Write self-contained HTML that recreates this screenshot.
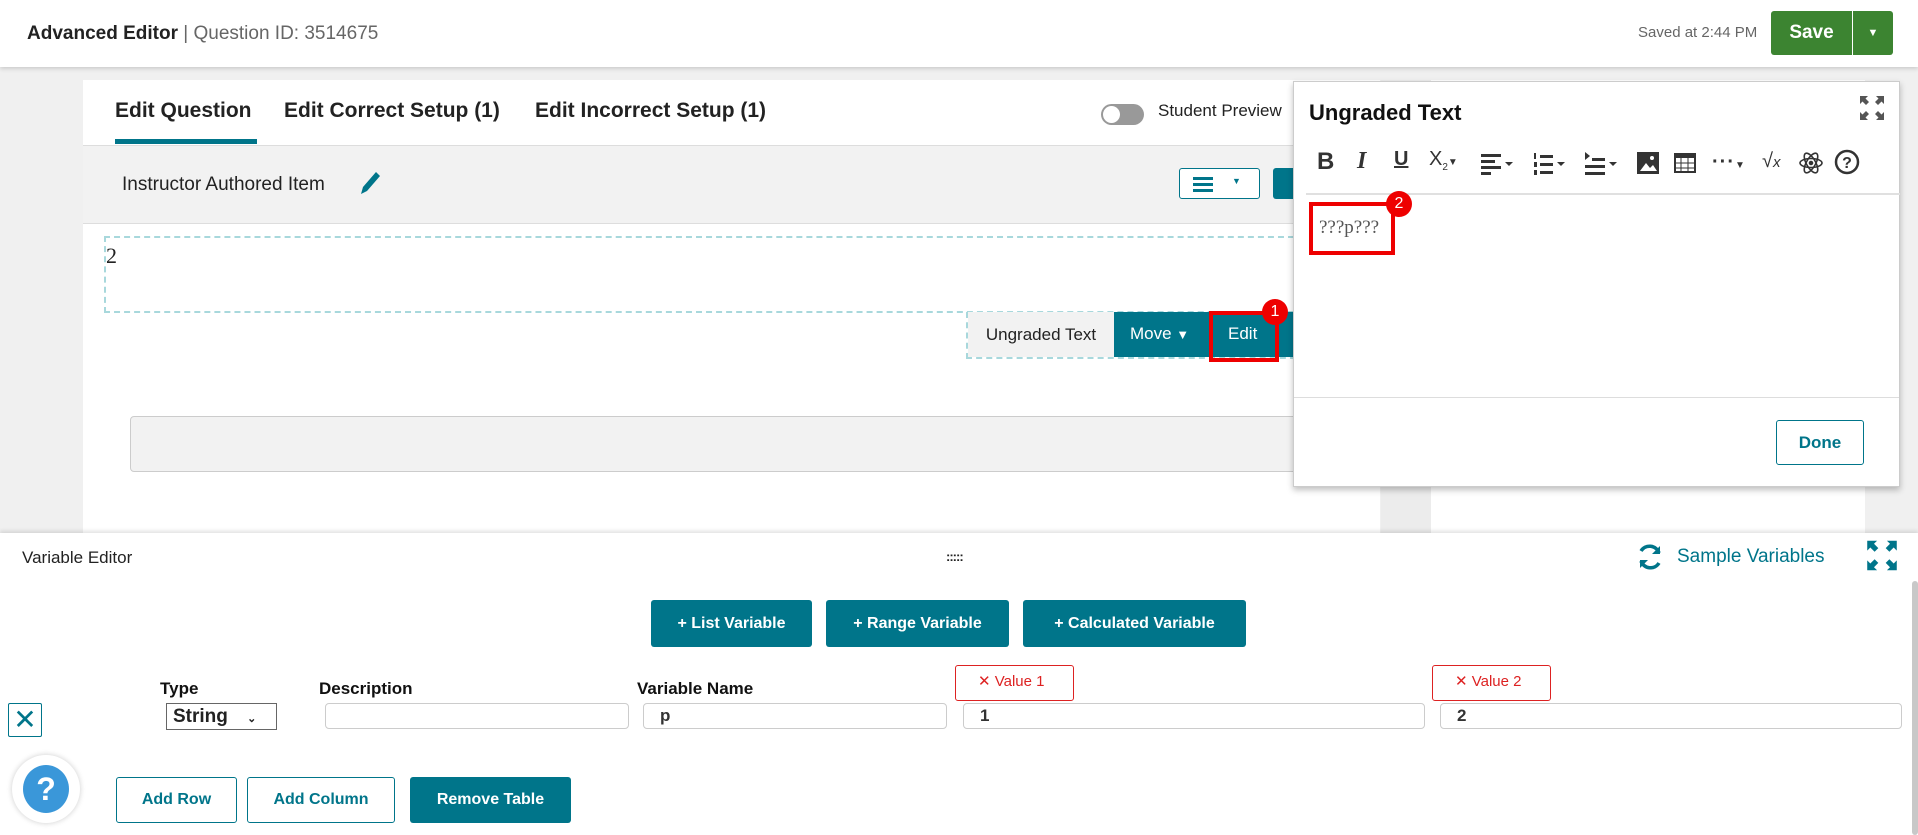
<!DOCTYPE html>
<html><head><meta charset="utf-8"><style>
*{box-sizing:border-box;margin:0;padding:0}
body{width:1918px;height:835px;overflow:hidden;background:#f0f0f0;font-family:"Liberation Sans",sans-serif;position:relative;color:#222}
.a{position:absolute}
.teal{background:#00758a;color:#fff}
.btn{position:absolute;border-radius:3px;font-weight:bold;font-size:16px;display:flex;align-items:center;justify-content:center}
.obtn{position:absolute;border:1px solid #00758a;border-radius:3px;color:#00758a;font-weight:bold;font-size:16px;display:flex;align-items:center;justify-content:center;background:#fff}
.inp{position:absolute;border:1px solid #ccc;border-radius:4px;background:#fff;font-size:17px;color:#333;padding-left:16px;line-height:24px;font-weight:bold}
.lbl{position:absolute;font-weight:bold;font-size:17px;color:#111}
.tab{position:absolute;top:99px;font-size:21px;font-weight:bold;color:#222}
.badge{position:absolute;width:26px;height:26px;border-radius:50%;background:#e00;color:#fff;font-size:16px;text-align:center;line-height:26px}
.ic{position:absolute;top:148px}
</style></head><body>
<div class="a" style="left:0;top:0;width:1918px;height:67px;background:#fff;box-shadow:0 2px 4px rgba(0,0,0,.15)"></div>
<div class="a" style="left:27px;top:23px;font-size:19px;color:#222"><b style="font-weight:600">Advanced Editor</b><span style="color:#666"> | Question ID: 3514675</span></div>
<div class="a" style="left:1638px;top:24px;font-size:15px;color:#666">Saved at 2:44 PM</div>
<div class="a" style="left:1771px;top:11px;width:81px;height:44px;background:#3c8431;border-radius:3px 0 0 3px;color:#fff;font-weight:bold;font-size:19px;text-align:center;line-height:44px">Save</div>
<div class="a" style="left:1853px;top:11px;width:40px;height:44px;background:#3c8431;border-radius:0 3px 3px 0;color:#fff;font-size:11px;text-align:center;line-height:44px">▼</div>

<div class="a" style="left:83px;top:80px;width:1297px;height:455px;background:#fff"></div>
<div class="a" style="left:1381px;top:80px;width:50px;height:455px;background:#ececec"></div>
<div class="a" style="left:1431px;top:80px;width:434px;height:455px;background:#fff"></div>
<div class="tab" style="left:115px">Edit Question</div>
<div class="a" style="left:115px;top:139px;width:142px;height:5px;background:#00758a"></div>
<div class="tab" style="left:284px">Edit Correct Setup (1)</div>
<div class="tab" style="left:535px">Edit Incorrect Setup (1)</div>
<div class="a" style="left:1101px;top:104px;width:43px;height:21px;border-radius:11px;background:#999"></div>
<div class="a" style="left:1103px;top:106px;width:17px;height:17px;border-radius:50%;background:#fff"></div>
<div class="a" style="left:1158px;top:101px;font-size:17px;color:#222">Student Preview</div>
<div class="a" style="left:83px;top:145px;width:1297px;height:79px;background:#f2f2f2;border-top:1px solid #ddd;border-bottom:1px solid #ddd"></div>
<div class="a" style="left:122px;top:174px;font-size:19px;color:#222">Instructor Authored Item</div>
<svg class="a" style="left:357px;top:169px" width="26" height="28" viewBox="0 0 26 28"><path d="M4 25 L6 18 L19 3 L23 7 L10 22 Z" fill="#00758a"/></svg>
<div class="a" style="left:1179px;top:168px;width:81px;height:31px;border:1px solid #00758a;border-radius:3px;background:#fff"></div>
<div class="a" style="left:1193px;top:177px;width:20px;height:3px;background:#00758a;box-shadow:0 6px 0 #00758a,0 12px 0 #00758a"></div>
<div class="a" style="left:1232px;top:176px;font-size:9px;color:#00758a">▼</div>
<div class="a teal" style="left:1273px;top:168px;width:25px;height:31px;border-radius:3px 0 0 3px"></div>
<div class="a" style="left:104px;top:236px;width:1190px;height:77px;border:2px dashed #a8d8dc;border-right:none"></div>
<div class="a" style="left:106px;top:243px;font-family:'Liberation Serif',serif;font-size:22px">2</div>
<div class="a" style="left:966px;top:312px;width:330px;height:47px;border:2px dashed #a8d8dc;border-top:none;border-right:none"></div>
<div class="a" style="left:968px;top:312px;width:146px;height:45px;background:#f2f2f2;font-size:17px;line-height:45px;text-align:center">Ungraded Text</div>
<div class="a teal" style="left:1114px;top:312px;width:180px;height:45px"></div>
<div class="a" style="left:1130px;top:324px;color:#fff;font-size:17px">Move <span style="font-size:13px">▼</span></div>
<div class="a" style="left:1209px;top:311px;width:70px;height:51px;border:4px solid #e00"></div>
<div class="a" style="left:1228px;top:324px;color:#fff;font-size:17px">Edit</div>
<div class="badge" style="left:1262px;top:299px">1</div>
<div class="a" style="left:130px;top:416px;width:1170px;height:56px;background:#f2f2f2;border:1px solid #ccc;border-radius:4px"></div>

<div class="a" style="left:1293px;top:81px;width:607px;height:406px;background:#fff;border:1px solid #ccc;box-shadow:0 3px 6px rgba(0,0,0,.25)"></div>
<div class="a" style="left:1309px;top:100px;font-size:22px;font-weight:bold;color:#111">Ungraded Text</div>
<svg class="a" style="left:1859px;top:95px" width="26" height="26" viewBox="0 0 26 26" fill="#555"><path d="M1 1h8L6.5 3.5 10 7 7 10 3.5 6.5 1 9zM25 1v8L22.5 6.5 19 10 16 7l3.5-3.5L17 1zM1 25v-8l2.5 2.5L7 16l3 3-3.5 3.5L9 25zM25 25h-8l2.5-2.5L16 19l3-3 3.5 3.5L25 17z"/></svg>
<div class="ic" style="left:1317px;font-size:24px;font-weight:bold;color:#333">B</div>
<div class="ic" style="left:1357px;font-size:24px;font-style:italic;font-weight:bold;font-family:'Liberation Serif',serif;color:#333">I</div>
<div class="ic" style="left:1394px;font-size:20px;font-weight:bold;text-decoration:underline;color:#333">U</div>
<div class="ic" style="left:1429px;font-size:20px;color:#333">X<sub style="font-size:10px">2</sub><span style="font-size:10px">▼</span></div>
<svg class="a" style="left:1481px;top:152px" width="36" height="24"><g fill="#333"><rect x="0" y="2" width="20" height="3"/><rect x="0" y="8" width="14" height="3"/><rect x="0" y="14" width="20" height="3"/><rect x="0" y="20" width="10" height="3"/><path d="M24 10h8l-4 4z"/></g></svg>
<svg class="a" style="left:1533px;top:152px" width="36" height="24"><g fill="#333"><rect x="7" y="3" width="13" height="3"/><rect x="7" y="11" width="13" height="3"/><rect x="7" y="19" width="13" height="3"/><rect x="1" y="1" width="2" height="6"/><rect x="1" y="10" width="3" height="5"/><rect x="1" y="18" width="3" height="5"/><path d="M24 10h8l-4 4z"/></g></svg>
<svg class="a" style="left:1585px;top:152px" width="36" height="24"><g fill="#333"><path d="M0 0l5 4-5 4z"/><rect x="7" y="6" width="13" height="3"/><rect x="0" y="13" width="20" height="3"/><rect x="0" y="20" width="20" height="3"/><path d="M24 10h8l-4 4z"/></g></svg>
<svg class="a" style="left:1637px;top:152px" width="22" height="22"><rect x="0" y="0" width="22" height="22" fill="#333"/><path d="M3 19l6-8 4 5 3-3 4 6z" fill="#fff"/><circle cx="15" cy="6" r="2" fill="#fff"/></svg>
<svg class="a" style="left:1674px;top:153px" width="22" height="20"><rect x="1" y="1" width="20" height="18" fill="none" stroke="#333" stroke-width="2"/><rect x="1" y="1" width="20" height="4" fill="#333"/><path d="M1 10h20M1 15h20M7 5v14M14 5v14" stroke="#333"/></svg>
<div class="ic" style="left:1712px;top:151px;font-size:20px;font-weight:bold;color:#333;letter-spacing:1px">···<span style="font-size:10px">▼</span></div>
<div class="ic" style="left:1762px;top:150px;font-size:20px;color:#333">√<i style="font-size:15px">x</i></div>
<svg class="a" style="left:1798px;top:150px" width="26" height="26" viewBox="0 0 26 26" fill="none" stroke="#333" stroke-width="1.6"><ellipse cx="13" cy="13" rx="11" ry="4.5"/><ellipse cx="13" cy="13" rx="11" ry="4.5" transform="rotate(60 13 13)"/><ellipse cx="13" cy="13" rx="11" ry="4.5" transform="rotate(-60 13 13)"/><circle cx="13" cy="13" r="1.5" fill="#333"/></svg>
<svg class="a" style="left:1834px;top:149px" width="26" height="26"><circle cx="13" cy="13" r="11" fill="none" stroke="#333" stroke-width="2.5"/><text x="13" y="19" font-size="16" font-weight="bold" text-anchor="middle" fill="#333" font-family="Liberation Sans">?</text></svg>
<div class="a" style="left:1306px;top:193px;width:594px;height:2px;background:#e0e0e0"></div>
<div class="a" style="left:1309px;top:202px;width:86px;height:53px;border:4px solid #e00"></div>
<div class="a" style="left:1319px;top:217px;font-family:'Liberation Serif',serif;font-size:19px;color:#555">???p???</div>
<div class="badge" style="left:1386px;top:191px">2</div>
<div class="a" style="left:1294px;top:397px;width:605px;height:1px;background:#ddd"></div>
<div class="obtn" style="left:1776px;top:420px;width:88px;height:45px;font-size:17px">Done</div>

<div class="a" style="left:0;top:533px;width:1918px;height:302px;background:#fff;box-shadow:0 -2px 4px rgba(0,0,0,.12)"></div>
<div class="a" style="left:22px;top:548px;font-size:17px;color:#222">Variable Editor</div>
<div class="a" style="left:946px;top:549px;font-size:13px;font-weight:bold;letter-spacing:-1px">:::::</div>
<svg class="a" style="left:1636px;top:542px" width="28" height="30" viewBox="0 0 28 30" fill="none" stroke="#00758a" stroke-width="3.5"><path d="M23 11A10 10 0 0 0 5 9"/><path d="M5 19A10 10 0 0 0 23 21"/><path d="M24 4v8h-8z" fill="#00758a" stroke="none"/><path d="M4 26v-8h8z" fill="#00758a" stroke="none"/></svg>
<div class="a" style="left:1677px;top:546px;font-size:19px;color:#00758a">Sample Variables</div>
<svg class="a" style="left:1866px;top:539px" width="32" height="33" viewBox="0 0 26 26" fill="#00758a"><path d="M1 1h8L6.5 3.5 10 7 7 10 3.5 6.5 1 9zM25 1v8L22.5 6.5 19 10 16 7l3.5-3.5L17 1zM1 25v-8l2.5 2.5L7 16l3 3-3.5 3.5L9 25zM25 25h-8l2.5-2.5L16 19l3-3 3.5 3.5L25 17z"/></svg>
<div class="a" style="left:1912px;top:581px;width:6px;height:254px;background:#c8c8c8;border-radius:3px"></div>
<div class="btn teal" style="left:651px;top:600px;width:161px;height:47px">+ List Variable</div>
<div class="btn teal" style="left:826px;top:600px;width:183px;height:47px">+ Range Variable</div>
<div class="btn teal" style="left:1023px;top:600px;width:223px;height:47px">+ Calculated Variable</div>
<div class="lbl" style="left:160px;top:679px">Type</div>
<div class="lbl" style="left:319px;top:679px">Description</div>
<div class="lbl" style="left:637px;top:679px">Variable Name</div>
<div class="a" style="left:955px;top:665px;width:119px;height:36px;border:1px solid #d22;border-radius:3px;color:#d22;font-size:15px;padding:6px 0 0 22px">✕ Value 1</div>
<div class="a" style="left:1432px;top:665px;width:119px;height:36px;border:1px solid #d22;border-radius:3px;color:#d22;font-size:15px;padding:6px 0 0 22px">✕ Value 2</div>
<div class="a" style="left:8px;top:703px;width:34px;height:34px;border:1px solid #00758a;border-radius:2px;color:#00758a;font-size:28px;line-height:32px;text-align:center">✕</div>
<div class="a" style="left:166px;top:703px;width:111px;height:27px;border:1px solid #666;font-size:19px;font-weight:bold;padding-left:6px;line-height:25px">String <span style="font-size:11px;margin-left:14px">⌄</span></div>
<div class="inp" style="left:325px;top:703px;width:304px;height:26px"></div>
<div class="inp" style="left:643px;top:703px;width:304px;height:26px">p</div>
<div class="inp" style="left:963px;top:703px;width:462px;height:26px">1</div>
<div class="inp" style="left:1440px;top:703px;width:462px;height:26px">2</div>
<div class="a" style="left:12px;top:755px;width:68px;height:68px;border-radius:50%;background:#fff;box-shadow:0 0 6px rgba(0,0,0,.2)"></div>
<div class="a" style="left:23px;top:765px;width:46px;height:48px;border-radius:50%;background:#3a97d9;color:#fff;font-size:32px;font-weight:bold;text-align:center;line-height:48px">?</div>
<div class="obtn" style="left:116px;top:777px;width:121px;height:46px">Add Row</div>
<div class="obtn" style="left:247px;top:777px;width:148px;height:46px">Add Column</div>
<div class="btn teal" style="left:410px;top:777px;width:161px;height:46px">Remove Table</div>
</body></html>
